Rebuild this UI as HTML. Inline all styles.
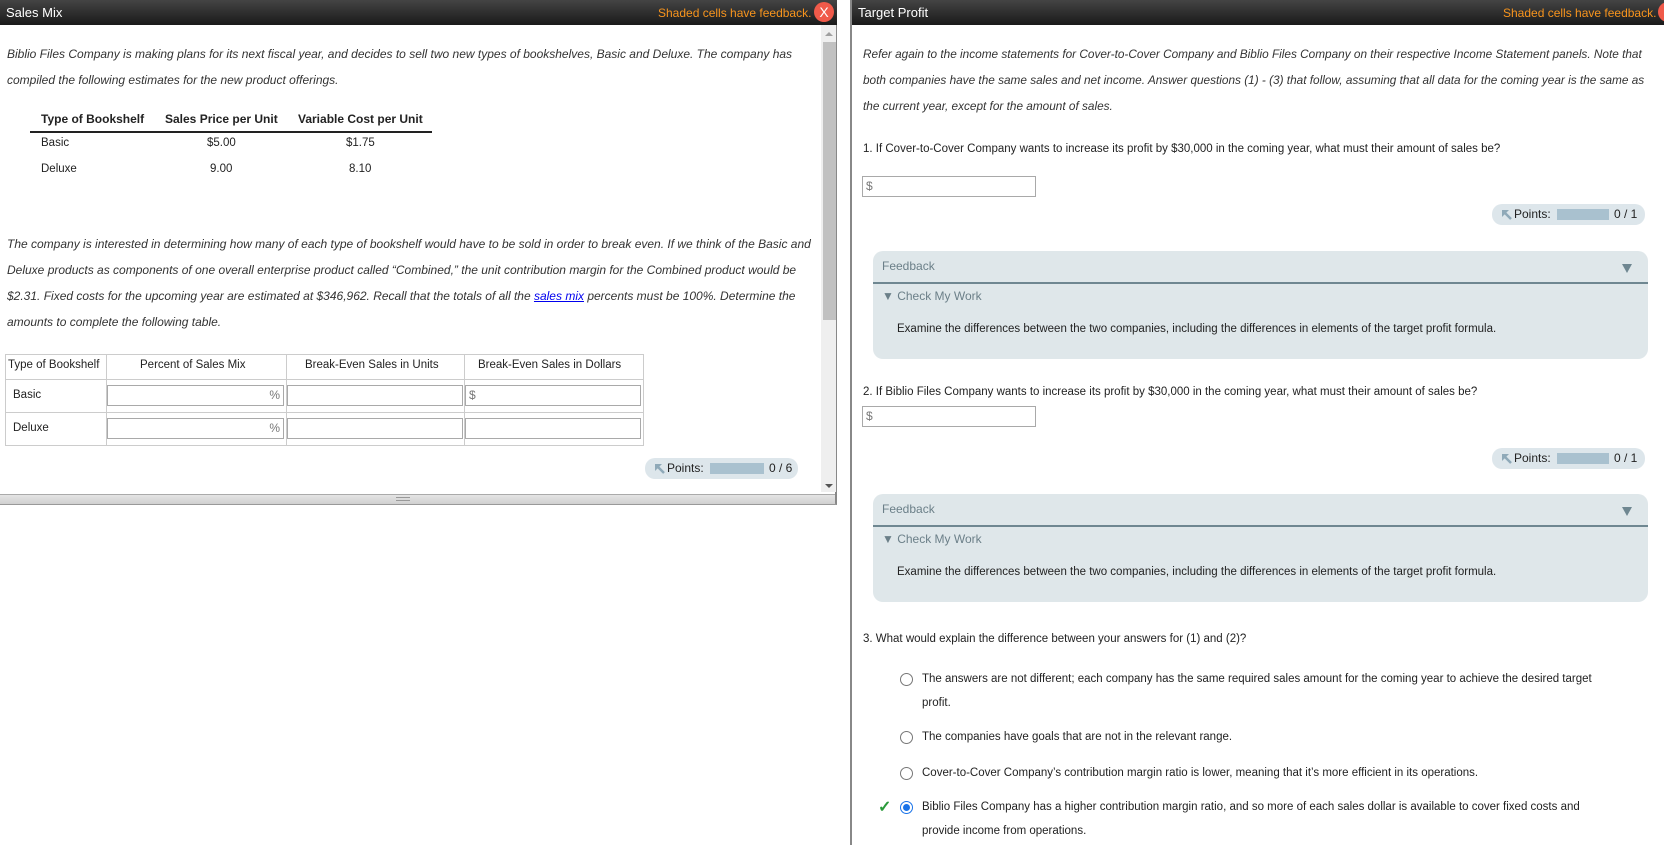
<!DOCTYPE html>
<html><head><meta charset="utf-8">
<style>
*{box-sizing:border-box;margin:0;padding:0}
body{width:1664px;height:845px;position:relative;background:#fff;font-family:"Liberation Sans",Arial,sans-serif;font-size:12px;color:#222;overflow:hidden}
.abs{position:absolute}
.hdr{position:absolute;top:0;height:25px;background:linear-gradient(#444,#1a1a1a);color:#fff;font-size:13px;line-height:25px;padding-left:6px}
.fb{position:absolute;color:#f7941d;font-size:12px;top:6px}
.it{font-style:italic;line-height:26px;font-size:12px;color:#333}
.inp{position:absolute;height:21px;border:1px solid #a9a9a9;background:#fff;font-size:12px;color:#777;line-height:19px;padding:0 3px}
.pts{position:absolute;height:21px;background:#dde6eb;border-radius:10px;font-size:12px;line-height:21px;color:#222}
.pts .bar{position:absolute;top:5px;height:11px;background:#a9c1cf}
.pts .ar{position:absolute;left:9px;top:5px;width:11px;height:11px}
.fbox{position:absolute;left:873px;width:775px;height:108px;background:#dfe7ea;border-radius:10px}
.fbox .t{position:absolute;left:9px;top:8px;color:#6b7f88;font-size:12px}
.fbox .line{position:absolute;left:0;right:0;top:31px;border-top:2px solid #6f8791}
.fbox .c{position:absolute;left:9px;top:38px;color:#6b7f88;font-size:12px}
.fbox .e{position:absolute;left:24px;top:72px;font-size:11.5px;color:#222}
.fbox .tri{position:absolute;right:16px;top:13px;width:0;height:0;border-left:5px solid transparent;border-right:5px solid transparent;border-top:9px solid #6f8791}
.q{position:absolute;left:863px;font-size:11.5px;color:#222}
.rad{position:absolute;left:900px;width:13px;height:13px;border:1px solid #777;border-radius:50%;background:#fff}
.opt{position:absolute;left:922px;font-size:11.5px;line-height:24px;color:#222}
</style></head><body>

<!-- LEFT PANEL -->
<div class="hdr" style="left:0;width:837px">Sales Mix</div>
<div class="fb" style="left:658px">Shaded cells have feedback.</div>
<div class="abs" style="left:814px;top:2px;width:20px;height:20px;border-radius:50%;background:#f05a4a;color:#fff;font-size:14px;text-align:center;line-height:20px">X</div>
<div class="abs" style="left:0;top:25px;width:837px;height:480px;border-right:2px solid #888;border-bottom:2px solid #999"></div>
<div class="abs" style="left:821px;top:25px;width:15px;height:467px;background:#efefef"></div>
<div class="abs" style="left:823px;top:42px;width:13px;height:278px;background:#c1c1c1"></div>
<div class="abs" style="left:825px;top:32px;width:0;height:0;border-left:4px solid transparent;border-right:4px solid transparent;border-bottom:4px solid #a0a0a0"></div>
<div class="abs" style="left:825px;top:484px;width:0;height:0;border-left:4px solid transparent;border-right:4px solid transparent;border-top:4px solid #555"></div>
<div class="abs" style="left:0;top:494px;width:835px;height:10px;background:linear-gradient(#e4e4e4,#d0d0d0);border-top:1px solid #aaa"></div>
<div class="abs" style="left:396px;top:497px;width:14px;height:4px;border-top:1px solid #999;border-bottom:1px solid #999"></div>

<div class="abs it" style="left:7px;top:41px;width:800px">Biblio Files Company is making plans for its next fiscal year, and decides to sell two new types of bookshelves, Basic and Deluxe. The company has compiled the following estimates for the new product offerings.</div>

<div class="abs" style="left:30px;top:112px;font-size:12px;font-weight:bold;color:#222">
<span class="abs" style="left:11px;white-space:nowrap">Type of Bookshelf</span>
<span class="abs" style="left:135px;white-space:nowrap">Sales Price per Unit</span>
<span class="abs" style="left:268px;white-space:nowrap">Variable Cost per Unit</span>
</div>
<div class="abs" style="left:30px;top:131px;width:402px;border-top:2px solid #222"></div>
<div class="abs" style="left:41px;top:137px;font-size:11.5px">Basic</div>
<div class="abs" style="left:207px;top:137px;font-size:11.5px">$5.00</div>
<div class="abs" style="left:346px;top:137px;font-size:11.5px">$1.75</div>
<div class="abs" style="left:41px;top:163px;font-size:11.5px">Deluxe</div>
<div class="abs" style="left:210px;top:163px;font-size:11.5px">9.00</div>
<div class="abs" style="left:349px;top:163px;font-size:11.5px">8.10</div>

<div class="abs it" style="left:7px;top:231px;width:812px">The company is interested in determining how many of each type of bookshelf would have to be sold in order to break even. If we think of the Basic and Deluxe products as components of one overall enterprise product called “Combined,” the unit contribution margin for the Combined product would be $2.31. Fixed costs for the upcoming year are estimated at $346,962. Recall that the totals of all the <span style="color:#00e;text-decoration:underline">sales mix</span> percents must be 100%. Determine the amounts to complete the following table.</div>

<div class="abs" style="left:5px;top:354px;width:639px;height:92px;border:1px solid #ccc"></div>
<div class="abs" style="left:106px;top:354px;height:92px;border-left:1px solid #ccc"></div>
<div class="abs" style="left:286px;top:354px;height:92px;border-left:1px solid #ccc"></div>
<div class="abs" style="left:464px;top:354px;height:92px;border-left:1px solid #ccc"></div>
<div class="abs" style="left:5px;top:379px;width:639px;border-top:1px solid #ccc"></div>
<div class="abs" style="left:5px;top:412px;width:639px;border-top:1px solid #ccc"></div>
<div class="abs" style="left:8px;top:359px;font-size:11.5px">Type of Bookshelf</div>
<div class="abs" style="left:140px;top:359px;font-size:11.5px">Percent of Sales Mix</div>
<div class="abs" style="left:305px;top:359px;font-size:11.5px">Break-Even Sales in Units</div>
<div class="abs" style="left:478px;top:359px;font-size:11.5px">Break-Even Sales in Dollars</div>
<div class="abs" style="left:13px;top:389px;font-size:11.5px">Basic</div>
<div class="abs" style="left:13px;top:422px;font-size:11.5px">Deluxe</div>
<div class="inp" style="left:107px;top:385px;width:177px;text-align:right">%</div>
<div class="inp" style="left:287px;top:385px;width:176px"></div>
<div class="inp" style="left:465px;top:385px;width:176px">$</div>
<div class="inp" style="left:107px;top:418px;width:177px;text-align:right">%</div>
<div class="inp" style="left:287px;top:418px;width:176px"></div>
<div class="inp" style="left:465px;top:418px;width:176px"></div>

<div class="pts" style="left:645px;top:458px;width:153px">
<svg class="ar" viewBox="0 0 11 11"><path d="M1 1h7L1 8z" fill="#8fa9b8"/><path d="M3 3l7 7" stroke="#8fa9b8" stroke-width="2.5"/></svg>
<span class="abs" style="left:22px">Points:</span>
<div class="bar" style="left:65px;width:54px"></div>
<span class="abs" style="left:124px">0 / 6</span>
</div>

<!-- RIGHT PANEL -->
<div class="abs" style="left:850px;top:0;height:845px;border-left:2px solid #888"></div>
<div class="hdr" style="left:852px;width:812px">Target Profit</div>
<div class="fb" style="left:1503px">Shaded cells have feedback.</div>
<div class="abs" style="left:1658px;top:2px;width:20px;height:20px;border-radius:50%;background:#f05a4a"></div>

<div class="abs it" style="left:863px;top:41px;width:795px;font-size:11.8px">Refer again to the income statements for Cover-to-Cover Company and Biblio Files Company on their respective Income Statement panels. Note that both companies have the same sales and net income. Answer questions (1) - (3) that follow, assuming that all data for the coming year is the same as the current year, except for the amount of sales.</div>

<div class="q" style="top:143px">1. If Cover-to-Cover Company wants to increase its profit by $30,000 in the coming year, what must their amount of sales be?</div>
<div class="abs" style="left:862px;top:176px;width:174px;height:21px;border:1px solid #a9a9a9;background:#fff;color:#777;font-size:12px;line-height:19px;padding-left:3px">$</div>
<div class="pts" style="left:1492px;top:204px;width:153px">
<svg class="ar" viewBox="0 0 11 11"><path d="M1 1h7L1 8z" fill="#8fa9b8"/><path d="M3 3l7 7" stroke="#8fa9b8" stroke-width="2.5"/></svg>
<span class="abs" style="left:22px">Points:</span>
<div class="bar" style="left:65px;width:52px"></div>
<span class="abs" style="left:122px">0 / 1</span>
</div>
<div class="fbox" style="top:251px"><div class="t">Feedback</div><div class="tri"></div><div class="line"></div><div class="c">▼ Check My Work</div><div class="e">Examine the differences between the two companies, including the differences in elements of the target profit formula.</div></div>

<div class="q" style="top:386px">2. If Biblio Files Company wants to increase its profit by $30,000 in the coming year, what must their amount of sales be?</div>
<div class="abs" style="left:862px;top:406px;width:174px;height:21px;border:1px solid #a9a9a9;background:#fff;color:#777;font-size:12px;line-height:19px;padding-left:3px">$</div>
<div class="pts" style="left:1492px;top:448px;width:153px">
<svg class="ar" viewBox="0 0 11 11"><path d="M1 1h7L1 8z" fill="#8fa9b8"/><path d="M3 3l7 7" stroke="#8fa9b8" stroke-width="2.5"/></svg>
<span class="abs" style="left:22px">Points:</span>
<div class="bar" style="left:65px;width:52px"></div>
<span class="abs" style="left:122px">0 / 1</span>
</div>
<div class="fbox" style="top:494px"><div class="t">Feedback</div><div class="tri"></div><div class="line"></div><div class="c">▼ Check My Work</div><div class="e">Examine the differences between the two companies, including the differences in elements of the target profit formula.</div></div>

<div class="q" style="top:633px">3. What would explain the difference between your answers for (1) and (2)?</div>
<div class="rad" style="top:673px"></div>
<div class="opt" style="top:667px;width:700px">The answers are not different; each company has the same required sales amount for the coming year to achieve the desired target profit.</div>
<div class="rad" style="top:731px"></div>
<div class="opt" style="top:725px">The companies have goals that are not in the relevant range.</div>
<div class="rad" style="top:767px"></div>
<div class="opt" style="top:761px">Cover-to-Cover Company’s contribution margin ratio is lower, meaning that it’s more efficient in its operations.</div>
<div class="abs" style="left:878px;top:797px;color:#2a9a3a;font-size:16px;font-weight:bold">✓</div>
<div class="rad" style="top:801px;border-color:#1a73e8"><div style="position:absolute;left:2px;top:2px;width:7px;height:7px;border-radius:50%;background:#1a73e8"></div></div>
<div class="opt" style="top:795px;width:690px">Biblio Files Company has a higher contribution margin ratio, and so more of each sales dollar is available to cover fixed costs and provide income from operations.</div>
</body></html>
